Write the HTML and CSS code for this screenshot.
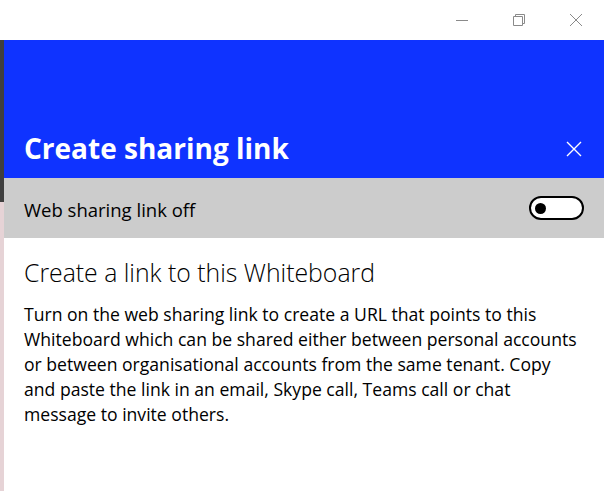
FILE: index.html
```html
<!DOCTYPE html>
<html lang="en">
<head>
<meta charset="utf-8">
<title>Create sharing link</title>
<link rel="stylesheet" href="styles.css">
</head>
<body>
<div class="titlebar">
  <div class="cap-btn">
    <svg width="14" height="14" viewBox="0 0 14 14"><path d="M1 7.5H13" stroke="#8a8a8a" stroke-width="1" fill="none"/></svg>
  </div>
  <div class="cap-btn">
    <svg width="14" height="14" viewBox="0 0 14 14"><path d="M1.5 3.5H10.5V12.5H1.5Z M3.5 3.5V1.5H12.5V10.5H10.5" stroke="#8a8a8a" stroke-width="1" fill="none"/></svg>
  </div>
  <div class="cap-btn">
    <svg width="14" height="14" viewBox="0 0 14 14"><path d="M1 1L13 13M13 1L1 13" stroke="#8a8a8a" stroke-width="1" fill="none"/></svg>
  </div>
</div>
<div class="app">
  <div class="edge"><div class="edge-dark"></div><div class="edge-pink"></div></div>
  <div class="panel">
    <div class="header">
      <h1 class="title">Create sharing link</h1>
      <svg class="close" width="16" height="16" viewBox="0 0 16 16"><path d="M1 1L15 15M15 1L1 15" stroke="#ffffff" stroke-width="1.4" fill="none"/></svg>
    </div>
    <div class="toggle-row">
      <span class="toggle-label">Web sharing link off</span>
      <span class="toggle"><span class="knob"></span></span>
    </div>
    <div class="content">
      <h2 class="subtitle">Create a link to this Whiteboard</h2>
      <p class="desc">Turn on the web sharing link to create a URL that points to this Whiteboard which can be shared either between personal accounts or between organisational accounts from the same tenant. Copy and paste the link in an email, Skype call, Teams call or chat message to invite others.</p>
    </div>
  </div>
</div>
</body>
</html>
```
FILE: styles.css
```css
html, body {
  margin: 0;
  padding: 0;
  background: #ffffff;
  font-family: "Open Sans", "Noto Sans", "Liberation Sans", sans-serif;
  color: #000;
}
.titlebar {
  height: 40px;
  display: flex;
  justify-content: flex-end;
  background: #ffffff;
}
.cap-btn {
  width: 57px;
  height: 40px;
  display: flex;
  align-items: center;
  justify-content: center;
}
.app {
  display: flex;
  height: 451px;
}
.edge {
  width: 4px;
  display: flex;
  flex-direction: column;
}
.edge-dark {
  height: 162px;
  background: #3f3f3f;
}
.edge-pink {
  flex: 1;
  background: #e6d3d6;
}
.panel {
  flex: 1;
  display: flex;
  flex-direction: column;
}
.header {
  height: 138px;
  background: #0f33ff;
  display: flex;
  align-items: flex-end;
  justify-content: space-between;
  padding: 0 22px 0 20px;
  box-sizing: border-box;
}
.title {
  margin: 0 0 12px 0;
  color: #fff;
  font-size: 28px;
  font-weight: 700;
  line-height: 36px;
}
.close {
  margin-bottom: 21px;
}
.toggle-row {
  height: 60px;
  background: #cccccc;
  display: flex;
  align-items: center;
  justify-content: space-between;
  padding: 0 20px 0 20px;
}
.toggle-label {
  font-size: 18.5px;
  padding-top: 2px;
}
.toggle {
  width: 47px;
  height: 20px;
  border: 2px solid #000;
  border-radius: 12px;
  background: #fff;
  display: flex;
  align-items: center;
  padding-left: 4px;
  box-sizing: content-box;
}
.knob {
  width: 11px;
  height: 11px;
  border-radius: 50%;
  background: #000;
}
.content {
  padding: 18px 22px 0 20px;
}
.subtitle {
  margin: 0;
  font-size: 24.8px;
  font-weight: 300;
  line-height: 32px;
}
.desc {
  margin: 14px 0 0 0;
  font-size: 17.6px;
  line-height: 25px;
}
```
